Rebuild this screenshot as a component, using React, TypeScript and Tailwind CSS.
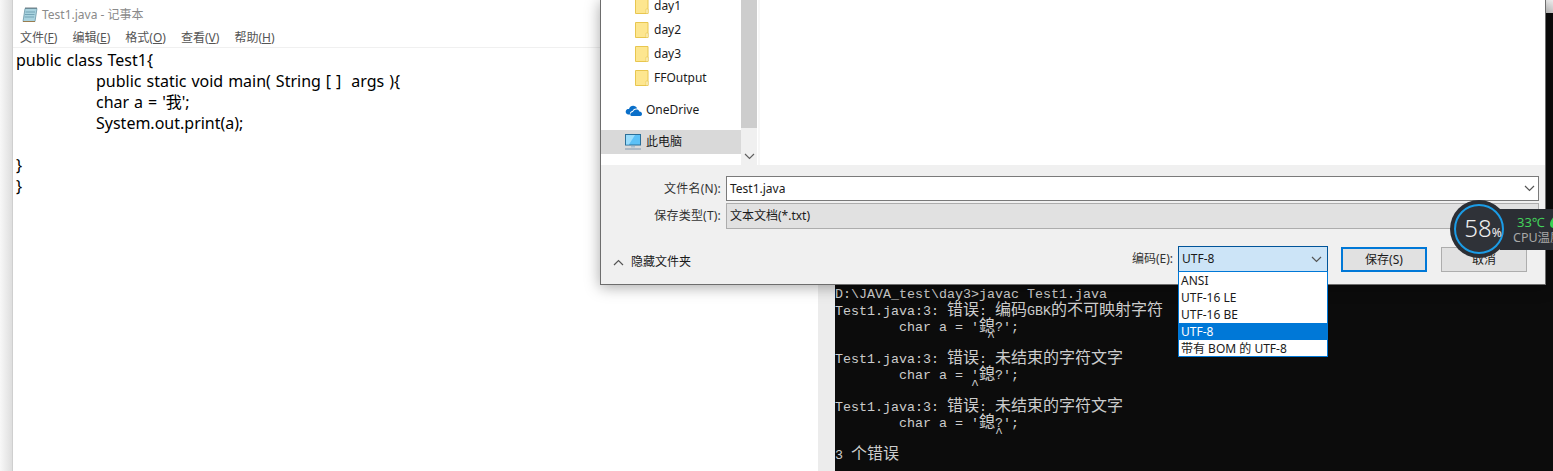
const uiFont = { fontFamily: '"Noto Sans", "Noto Sans CJK SC", sans-serif' };

const Chevron = ({ className = "", up = false }: { className?: string; up?: boolean }) => (
  <svg width="11" height="7" viewBox="0 0 11 7" className={className} fill="none" stroke="currentColor" strokeWidth="1.2">
    <path d={up ? "M1 6l4.5-4.5L10 6" : "M1 1l4.5 4.5L10 1"} />
  </svg>
);

const Folder = () => (
  <svg width="14" height="16" viewBox="0 0 14 16" className="shrink-0">
    <path d="M.5.5h12.5v15H.5z" fill="#fde68f" stroke="#e8c64f" />
    <path d="M11 11v4.500h2V11z" fill="#fff6cf" stroke="#e8c64f" strokeWidth=".6" />
  </svg>
);

const NotepadIcon = () => (
  <svg width="16" height="17" viewBox="0 0 16 17" className="shrink-0">
    <path d="M3 2.500h12l-2 13H1z" fill="#a9d3df" stroke="#6b96a6" strokeWidth=".8" />
    <path d="M3.500 6h9.500M3 8.500h9.500M2.600 11h9.500" stroke="#5b8fa5" strokeWidth=".7" />
    <path d="M3.500 2h11.500" stroke="#4b5c63" strokeWidth="1.600" strokeDasharray="1 1" />
    <path d="M1 15.500h12" stroke="#9a7d4f" strokeWidth="1" />
  </svg>
);

const OneDriveIcon = () => (
  <svg width="17" height="11" viewBox="0 0 17 11" className="shrink-0">
    <path d="M5 9.500C1.500 10 0 7.500 1 5.500 1.800 4 3 3.800 4 4 5 1 8 0 10.500 1.500c.8.500 1.300 1.100 1.500 2-2.500-.3-4 1-4.500 2.500C6 6 4.500 7.500 5 9.500z" fill="#0a6fc9" />
    <path d="M6.500 11c-2-.2-1.500-3.800 1.500-4 .5-2 2.500-3 4.300-2.400 1 .3 1.700 1 2 2 1.700 0 2.700 1.200 2.700 2.400 0 1-.7 2-1.800 2z" fill="#0a6fc9" />
  </svg>
);

const PcIcon = () => (
  <svg width="16" height="16" viewBox="0 0 16 16" className="shrink-0">
    <rect x=".5" y=".5" width="15" height="10.500" fill="#5cc1f7" stroke="#2b6f99" />
    <path d="M1 1h9L4 10.500H1z" fill="#9adcfb" />
    <path d="M6 12h4v1.500H6z" fill="#a9bfd0" />
    <path d="M0 15h16" stroke="#8ea3b8" strokeWidth="1.200" />
  </svg>
);

const FlameIcon = () => (
  <svg width="8" height="14" viewBox="0 0 8 14" className="shrink-0">
    <path d="M4 0c.5 3 4 5 4 9a4 4 0 0 1-8 0c0-4 3.500-6 4-9z" fill="#39d353" />
  </svg>
);

const menus = [
  { label: "文件(", key: "F" },
  { label: "编辑(", key: "E" },
  { label: "格式(", key: "O" },
  { label: "查看(", key: "V" },
  { label: "帮助(", key: "H" },
];

const Notepad = () => (
  <div className="w-[805px] shrink-0 bg-white flex flex-col" style={uiFont}>
    <div className="h-[27px] flex items-center gap-[4px] pl-[9px] pt-[2px] text-[12px] text-[#8a8a8a]">
      <NotepadIcon />
      <span>Test1.java - 记事本</span>
    </div>
    <div className="h-[21px] flex items-center gap-[15px] pl-[7px] pt-[2px] text-[12px] text-[#555] border-b border-[#f0f0f0]">
      {menus.map((m) => (
        <span key={m.key}>
          {m.label}
          <span className="underline">{m.key}</span>)
        </span>
      ))}
    </div>
    <div className="pl-[3px] pt-[2px] text-[16px] leading-[21px] text-black [word-spacing:0.8px]">
      <div>public class Test1{"{"}</div>
      <div className="pl-[80px] whitespace-pre">public static void main( String [ ]  args ){"{"}</div>
      <div className="pl-[80px]">char a = '我';</div>
      <div className="pl-[80px]">System.out.print(a);</div>
      <div className="h-[21px]" />
      <div>{"}"}</div>
      <div>{"}"}</div>
    </div>
  </div>
);

// CJK glyphs are double width in the console, so they get a bigger size than the latin text
const W = ({ children }: { children: string }) => <span className="text-[16px]">{children}</span>;

const Console = () => (
  <div className="flex-1 flex flex-col min-w-0">
    <div className="h-[13px] bg-linear-to-b from-[#f2f2f2] to-[#cfcfcf]" />
    <div
      className="flex-1 bg-[#0c0c0c] pt-[274px] text-[13.33px] leading-[16px] text-[#cccccc] whitespace-pre overflow-hidden"
      style={{ fontFamily: '"Liberation Mono", "Noto Sans CJK SC", monospace' }}
    >
      <div className="h-[16px]">D:\JAVA_test\day3&gt;javac Test1.java</div>
      <div className="h-[16px]">Test1.java:3: <W>错误</W>: <W>编码</W>GBK<W>的不可映射字符</W></div>
      <div className="h-[16px]">        char a = '<W>鎴</W>?';</div>
      <div className="h-[16px] leading-[6px]">                   ^</div>
      <div className="h-[16px]">Test1.java:3: <W>错误</W>: <W>未结束的字符文字</W></div>
      <div className="h-[16px]">        char a = '<W>鎴</W>?';</div>
      <div className="h-[16px] leading-[6px]">                 ^</div>
      <div className="h-[16px]">Test1.java:3: <W>错误</W>: <W>未结束的字符文字</W></div>
      <div className="h-[16px]">        char a = '<W>鎴</W>?';</div>
      <div className="h-[16px] leading-[6px]">                    ^</div>
      <div className="h-[16px]">3 <W>个错误</W></div>
    </div>
  </div>
);

const NavRow = ({ children, active = false, indent }: { children: React.ReactNode; active?: boolean; indent: string }) => (
  <div className={`h-[24px] flex items-center ${indent} ${active ? "bg-[#d9d9d9]" : ""}`}>{children}</div>
);

const Encodings = ["ANSI", "UTF-16 LE", "UTF-16 BE", "UTF-8", "带有 BOM 的 UTF-8"];

const SaveDialog = () => (
  <div
    className="absolute left-[600px] top-0 w-[946px] h-[285px] flex flex-col bg-[#f0f0f0] border-x border-b border-[#6d6d6d] shadow-[0_2px_14px_rgba(0,0,0,0.35)] text-[12px] text-[#1a1a1a]"
    style={uiFont}
  >
    <div className="h-[165px] flex bg-white overflow-hidden shrink-0">
      <div className="w-[140px] shrink-0 -mt-[6px]">
        {["day1", "day2", "day3", "FFOutput"].map((d) => (
          <NavRow key={d} indent="pl-[34px] gap-[5px]">
            <Folder />
            <span>{d}</span>
          </NavRow>
        ))}
        <div className="h-[8px]" />
        <NavRow indent="pl-[24px] gap-[4px]">
          <OneDriveIcon />
          <span>OneDrive</span>
        </NavRow>
        <div className="h-[8px]" />
        <NavRow active indent="pl-[24px] gap-[5px]">
          <PcIcon />
          <span>此电脑</span>
        </NavRow>
      </div>
      <div className="w-[16px] shrink-0 bg-[#f0f0f0] flex flex-col">
        <div className="h-[128px] bg-[#cdcdcd]" />
        <div className="flex-1 flex items-end justify-center pb-[5px] text-[#606060]">
          <Chevron />
        </div>
      </div>
      <div className="flex-1 border-l-2 border-[#f7f7f7] ml-[1px]" />
    </div>

    <div className="flex-1 flex flex-col pt-[11px]">
      <div className="flex items-center h-[25px]">
        <span className="w-[120px] text-right text-[#333] tracking-[0.2px]">文件名(N):</span>
        <div className="ml-[5px] w-[813px] h-[25px] flex items-center justify-between px-[3px] pr-[2px] bg-white border border-[#7a7a7a]">
          <span>Test1.java</span>
          <Chevron className="text-[#555] mr-[1px]" />
        </div>
      </div>
      <div className="flex items-center h-[26px] mt-[2px]">
        <span className="w-[120px] text-right text-[#333] tracking-[0.2px]">保存类型(T):</span>
        <div className="ml-[5px] w-[813px] h-[26px] flex items-center px-[3px] bg-[#e1e1e1] border border-[#adadad]">
          文本文档(*.txt)
        </div>
      </div>
      <div className="flex items-start mt-[17px] relative">
        <div className="h-[26px] flex items-center gap-[7px] pl-[12px] pt-[6px]">
          <Chevron up className="text-[#555]" />
          <span>隐藏文件夹</span>
        </div>
        <div className="ml-auto h-[26px] flex items-center text-[#333] mr-[5px]">编码(E):</div>
        <div className="relative w-[150px] mr-[13px]">
          <div className="h-[26px] flex items-center justify-between pl-[3px] pr-[5px] bg-[#cce4f7] border border-[#005499]">
            <span>UTF-8</span>
            <Chevron className="text-[#555]" />
          </div>
          <div className="absolute left-0 top-[25px] w-[150px] h-[86px] z-10 bg-white border border-[#0078d7] flex flex-col">
            {Encodings.map((e) => (
              <div
                key={e}
                className={`h-[17px] leading-[17px] pl-[2px] ${e === "UTF-8" ? "bg-[#0078d7] text-white" : "text-[#1a1a1a]"}`}
              >
                {e}
              </div>
            ))}
          </div>
        </div>
        <div className="w-[86px] h-[25px] mt-[1px] flex items-center justify-center bg-[#e1e1e1] border-2 border-[#0078d7]">
          保存(S)
        </div>
        <div className="w-[86px] h-[25px] mt-[1px] ml-[14px] mr-[18px] flex items-center justify-center bg-[#e1e1e1] border border-[#adadad]">
          取消
        </div>
      </div>
    </div>
  </div>
);

const CpuGauge = () => (
  <div className="absolute left-[1450px] top-[200px] flex items-center" style={uiFont}>
    <div className="relative z-10 w-[58px] h-[58px] rounded-full bg-[#2b2e34] flex items-center justify-center">
      <div className="w-[50px] h-[50px] rounded-full border-[2px] border-[#1b9ce6] bg-[#2f3238] flex items-baseline justify-center text-[#f0f0f0] pt-[8px] pl-[8px]">
        <span className="text-[24px] leading-[28px] font-light">58</span>
        <span className="text-[12px]">%</span>
      </div>
    </div>
    <div className="-ml-[8px] w-[53px] h-[41px] bg-[#2b2e34] pl-[17px] pt-[5px] overflow-hidden">
      <div className="flex items-center gap-[5px] text-[13px] leading-[16px] text-[#43d15a] whitespace-nowrap">
        33℃
        <FlameIcon />
      </div>
      <div className="text-[12.5px] leading-[16px] text-[#a8a8a8] whitespace-nowrap -ml-[4px]">CPU温度</div>
    </div>
  </div>
);

export default function App() {
  return (
    <div className="relative w-[1553px] h-[471px] overflow-hidden flex bg-white">
      <div className="w-[13px] shrink-0 bg-linear-to-r from-[#f8f8f8] to-[#dedede] border-r border-[#cfcfcf]" />
      <Notepad />
      <div className="w-[17px] shrink-0 bg-[#ececec]" />
      <Console />
      <SaveDialog />
      <CpuGauge />
    </div>
  );
}
